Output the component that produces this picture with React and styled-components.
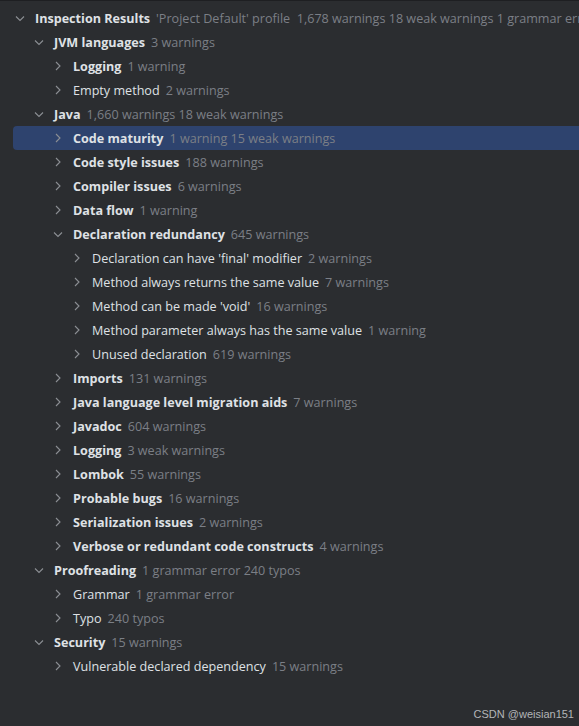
import React from "react";
import styled, { createGlobalStyle } from "styled-components";

const GlobalStyle = createGlobalStyle`
  html, body {
    margin: 0;
    padding: 0;
    background: #2b2d30;
  }
  body {
    font-family: "Open Sans", "Noto Sans", "Liberation Sans", sans-serif;
  }
`;

const Panel = styled.div`
  position: relative;
  width: 579px;
  height: 726px;
  background: #2b2d30;
  border-top: 1px solid #1e1f22;
  box-sizing: border-box;
  padding-top: 5px;
  overflow: hidden;
`;

const Tree = styled.ul`
  list-style: none;
  margin: 0;
  padding: 0;
`;

const Row = styled.li`
  display: flex;
  align-items: center;
  height: 24px;
  margin: 0 0 0 13px;
  padding-left: ${(p) => 2 + p.$level * 19}px;
  border-radius: 4px 0 0 4px;
  background: ${(p) => (p.$selected ? "#2e436e" : "transparent")};
  white-space: pre;
  font-size: 12.6px;
`;

const Arrow = styled.span`
  display: inline-flex;
  align-items: center;
  justify-content: flex-start;
  width: 20px;
  height: 12px;
  flex-shrink: 0;
  color: #8c8f94;
`;

const Name = styled.span`
  color: #dfe1e5;
  font-weight: ${(p) => (p.$bold ? 700 : 400)};
`;

const Count = styled.span`
  color: #7b7f86;
  margin-left: 6px;
`;

const Watermark = styled.div`
  position: absolute;
  right: 5px;
  bottom: 6px;
  font-family: "Liberation Sans", Arial, sans-serif;
  font-size: 11px;
  color: #b3b5b8;
`;

const Chevron = ({ open }) => (
  <svg width="10" height="10" viewBox="0 0 10 10" fill="none">
    {open ? (
      <path d="M1 3.5 L5 7.5 L9 3.5" stroke="currentColor" strokeWidth="1.1" />
    ) : (
      <path d="M3 1 L7 5 L3 9" stroke="currentColor" strokeWidth="1.1" />
    )}
  </svg>
);

const rows = [
  { l: 0, open: true, bold: true, name: "Inspection Results", count: "'Project Default' profile  1,678 warnings 18 weak warnings 1 grammar error" },
  { l: 1, open: true, bold: true, name: "JVM languages", count: "3 warnings" },
  { l: 2, bold: true, name: "Logging", count: "1 warning" },
  { l: 2, name: "Empty method", count: "2 warnings" },
  { l: 1, open: true, bold: true, name: "Java", count: "1,660 warnings 18 weak warnings" },
  { l: 2, bold: true, name: "Code maturity", count: "1 warning 15 weak warnings", selected: true },
  { l: 2, bold: true, name: "Code style issues", count: "188 warnings" },
  { l: 2, bold: true, name: "Compiler issues", count: "6 warnings" },
  { l: 2, bold: true, name: "Data flow", count: "1 warning" },
  { l: 2, open: true, bold: true, name: "Declaration redundancy", count: "645 warnings" },
  { l: 3, name: "Declaration can have 'final' modifier", count: "2 warnings" },
  { l: 3, name: "Method always returns the same value", count: "7 warnings" },
  { l: 3, name: "Method can be made 'void'", count: "16 warnings" },
  { l: 3, name: "Method parameter always has the same value", count: "1 warning" },
  { l: 3, name: "Unused declaration", count: "619 warnings" },
  { l: 2, bold: true, name: "Imports", count: "131 warnings" },
  { l: 2, bold: true, name: "Java language level migration aids", count: "7 warnings" },
  { l: 2, bold: true, name: "Javadoc", count: "604 warnings" },
  { l: 2, bold: true, name: "Logging", count: "3 weak warnings" },
  { l: 2, bold: true, name: "Lombok", count: "55 warnings" },
  { l: 2, bold: true, name: "Probable bugs", count: "16 warnings" },
  { l: 2, bold: true, name: "Serialization issues", count: "2 warnings" },
  { l: 2, bold: true, name: "Verbose or redundant code constructs", count: "4 warnings" },
  { l: 1, open: true, bold: true, name: "Proofreading", count: "1 grammar error 240 typos" },
  { l: 2, name: "Grammar", count: "1 grammar error" },
  { l: 2, name: "Typo", count: "240 typos" },
  { l: 1, open: true, bold: true, name: "Security", count: "15 warnings" },
  { l: 2, name: "Vulnerable declared dependency", count: "15 warnings" },
];

export default function App() {
  return (
    <>
      <GlobalStyle />
      <Panel>
        <Tree>
          {rows.map((r, i) => (
            <Row key={i} $level={r.l} $selected={r.selected}>
              <Arrow>
                <Chevron open={r.open} />
              </Arrow>
              <Name $bold={r.bold}>{r.name}</Name>
              <Count>{r.count}</Count>
            </Row>
          ))}
        </Tree>
        <Watermark>CSDN @weisian151</Watermark>
      </Panel>
    </>
  );
}
